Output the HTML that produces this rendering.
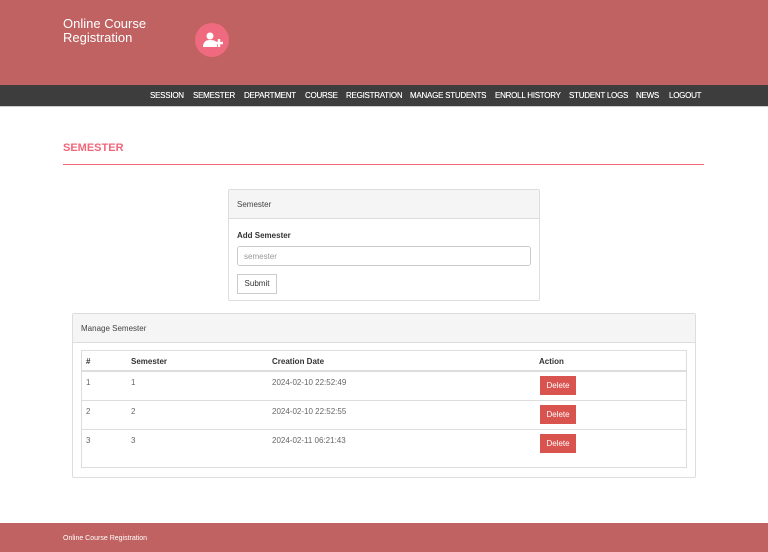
<!DOCTYPE html>
<html><head><meta charset="utf-8"><style>
*{box-sizing:border-box;margin:0;padding:0}
body{width:768px;height:552px;position:relative;font-family:"Liberation Sans",sans-serif;background:#fff;overflow:hidden;color:#333}
.a{position:absolute}
.hdr{left:0;top:0;width:768px;height:85px;background:#c06262}
.nav{left:0;top:85px;width:768px;height:22px;background:#3d3d3d;border-bottom:1px solid #ccc}
.nav span{position:absolute;top:6px;color:#fff;font-size:8px;letter-spacing:-0.25px;text-shadow:0 0 0.3px #fff}
.panel{border:1px solid #ddd;border-radius:2px;background:#fff}
.ph{background:#f5f5f5;border-bottom:1px solid #ddd;font-size:8px;color:#444}
.del{position:absolute;left:540px;width:36px;height:19px;background:#d9534f;color:#fff;font-size:8px;text-align:center;line-height:19px}
.row{position:absolute;left:82px;width:604px;border-top:1px solid #ddd}
.t{position:absolute;font-size:8px;color:#666}
.h{position:absolute;font-size:8px;font-weight:bold;color:#333;top:357px}
</style></head><body>
<div class="a hdr"></div>
<div class="a" style="left:63px;top:17px;color:#fff;font-size:13px;line-height:14px">Online Course<br>Registration</div>
<div class="a" style="left:195px;top:23px;width:34px;height:34px;border-radius:50%;background:#ef6a7e"></div>
<svg class="a" style="left:202px;top:31px" width="22" height="18" viewBox="0 0 22 18"><circle cx="8" cy="5" r="3.5" fill="#fff"/><path d="M1 16c0-5 3-7 7-7s6 1 7 3v4z" fill="#fff"/><path d="M17 8v8M13 12h8" stroke="#fff" stroke-width="2.4"/></svg>
<div class="a nav">
<span style="left:150px">SESSION</span><span style="left:193px">SEMESTER</span><span style="left:244px">DEPARTMENT</span><span style="left:305px">COURSE</span><span style="left:346px">REGISTRATION</span><span style="left:410px">MANAGE STUDENTS</span><span style="left:495px">ENROLL HISTORY</span><span style="left:569px">STUDENT LOGS</span><span style="left:636px">NEWS</span><span style="left:669px">LOGOUT</span>
</div>
<div class="a" style="left:63px;top:142px;font-size:11px;font-weight:bold;color:#f0677a">SEMESTER</div>
<div class="a" style="left:63px;top:164px;width:641px;height:1px;background:#f0677a"></div>

<div class="a panel" style="left:228px;top:189px;width:312px;height:112px">
<div class="ph" style="height:29px;padding:10px 8px">Semester</div>
<div class="a" style="left:8px;top:41px;font-size:8px;font-weight:bold;color:#333">Add Semester</div>
<div class="a" style="left:8px;top:56px;width:294px;height:20px;border:1px solid #ccc;border-radius:3px;font-size:8px;color:#999;padding:5px 6px">semester</div>
<div class="a" style="left:8px;top:84px;width:40px;height:20px;border:1px solid #ccc;font-size:8px;color:#333;text-align:center;line-height:18px">Submit</div>
</div>

<div class="a panel" style="left:72px;top:313px;width:624px;height:165px">
<div class="ph" style="height:29px;padding:10px 8px">Manage Semester</div>
</div>
<div class="a" style="left:81px;top:350px;width:606px;height:118px;border:1px solid #ddd"></div>
<div class="h" style="left:86px">#</div>
<div class="h" style="left:131px">Semester</div>
<div class="h" style="left:272px">Creation Date</div>
<div class="h" style="left:539px">Action</div>
<div class="a" style="left:82px;top:370px;width:604px;height:2px;background:#ddd"></div>
<div class="row" style="top:400px"></div><div class="row" style="top:429px"></div>
<div class="t" style="left:86px;top:378px">1</div><div class="t" style="left:131px;top:378px">1</div><div class="t" style="left:272px;top:378px">2024-02-10 22:52:49</div>
<div class="t" style="left:86px;top:407px">2</div><div class="t" style="left:131px;top:407px">2</div><div class="t" style="left:272px;top:407px">2024-02-10 22:52:55</div>
<div class="t" style="left:86px;top:436px">3</div><div class="t" style="left:131px;top:436px">3</div><div class="t" style="left:272px;top:436px">2024-02-11 06:21:43</div>
<div class="del" style="top:376px">Delete</div>
<div class="del" style="top:405px">Delete</div>
<div class="del" style="top:434px">Delete</div>

<div class="a" style="left:0;top:523px;width:768px;height:29px;background:#c06262"></div>
<div class="a" style="left:63px;top:535px;font-size:7px;color:#fff">Online Course Registration</div>
</body></html>
